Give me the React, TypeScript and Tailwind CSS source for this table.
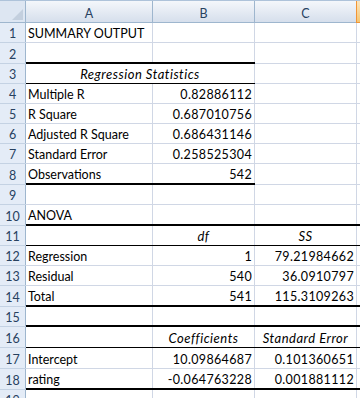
import React from 'react';

type Line = 'grid' | 'thin' | 'thick';
type Col = 'A' | 'B' | 'C' | 'AB' | 'D';

interface CellDef {
  col: Col;
  text?: string;
  align?: 'l' | 'r' | 'c';
  italic?: boolean;
  line?: Line;
}

interface RowDef {
  n: number;
  h: 20 | 21;
  cells: CellDef[];
}

const widths: Record<Col, string> = {
  A: 'w-[127px] shrink-0',
  B: 'w-[102px] shrink-0',
  C: 'w-[102px] shrink-0',
  AB: 'w-[229px] shrink-0',
  D: 'flex-1 min-w-0',
};

const heights = { 20: 'h-[20px]', 21: 'h-[21px]' };

const lines: Record<Line, string> = {
  grid: 'h-px bg-[#d0d7e5]',
  thin: 'h-px bg-black',
  thick: 'h-[2px] bg-black',
};

const aligns = {
  l: 'justify-start pl-[2px]',
  r: 'justify-end pr-[2px] tracking-[0.35px]',
  c: 'justify-center',
};

// blank cells for a row, with an optional border style
function blank(line: Line = 'grid'): CellDef[] {
  return [
    { col: 'A', line },
    { col: 'B', line },
    { col: 'C', line },
    { col: 'D', line },
  ];
}

// label + value(s); wide tables carry their borders on into column D
function row(a: string, b: string, line: Line = 'grid', c = '', wide = false): CellDef[] {
  return [
    { col: 'A', text: a, line },
    { col: 'B', text: b, align: 'r', line },
    { col: 'C', text: c, align: 'r', line: wide ? line : 'grid' },
    { col: 'D', line: wide ? line : 'grid' },
  ];
}

const rows: RowDef[] = [
  { n: 1, h: 20, cells: [{ col: 'A', text: 'SUMMARY OUTPUT' }, { col: 'B' }, { col: 'C' }, { col: 'D' }] },
  { n: 2, h: 21, cells: [{ col: 'A', line: 'thick' }, { col: 'B', line: 'thick' }, { col: 'C' }, { col: 'D' }] },
  {
    n: 3,
    h: 20,
    cells: [
      { col: 'AB', text: 'Regression Statistics', align: 'c', italic: true, line: 'thin' },
      { col: 'C' },
      { col: 'D' },
    ],
  },
  { n: 4, h: 20, cells: row('Multiple R', '0.82886112') },
  { n: 5, h: 20, cells: row('R Square', '0.687010756') },
  { n: 6, h: 20, cells: row('Adjusted R Square', '0.686431146') },
  { n: 7, h: 20, cells: row('Standard Error', '0.258525304') },
  { n: 8, h: 21, cells: row('Observations', '542', 'thick') },
  { n: 9, h: 20, cells: blank() },
  {
    n: 10,
    h: 21,
    cells: [{ col: 'A', text: 'ANOVA', line: 'thick' }, { col: 'B', line: 'thick' }, { col: 'C', line: 'thick' }, { col: 'D', line: 'thick' }],
  },
  {
    n: 11,
    h: 20,
    cells: [
      { col: 'A', line: 'thin' },
      { col: 'B', text: 'df', align: 'c', italic: true, line: 'thin' },
      { col: 'C', text: 'SS', align: 'c', italic: true, line: 'thin' },
      { col: 'D', line: 'thin' },
    ],
  },
  { n: 12, h: 20, cells: row('Regression', '1', 'grid', '79.21984662', true) },
  { n: 13, h: 20, cells: row('Residual', '540', 'grid', '36.0910797', true) },
  { n: 14, h: 21, cells: row('Total', '541', 'thick', '115.3109263', true) },
  { n: 15, h: 20, cells: blank('thick') },
  {
    n: 16,
    h: 21,
    cells: [
      { col: 'A', line: 'thin' },
      { col: 'B', text: 'Coefficients', align: 'c', italic: true, line: 'thin' },
      { col: 'C', text: 'Standard Error', align: 'c', italic: true, line: 'thin' },
      { col: 'D', line: 'thin' },
    ],
  },
  { n: 17, h: 21, cells: row('Intercept', '10.09864687', 'grid', '0.101360651', true) },
  { n: 18, h: 21, cells: row('rating', '-0.064763228', 'thick', '0.001881112', true) },
  { n: 19, h: 20, cells: blank() },
];

function Cell({ col, text, align = 'l', italic, line = 'grid' }: CellDef) {
  return (
    <div className={`flex flex-col ${widths[col]}`}>
      <div
        className={`flex-1 min-h-0 flex items-end pb-[1px] whitespace-nowrap ${aligns[align]} ${
          col === 'D' ? '' : 'border-r border-[#d0d7e5]'
        } ${italic ? 'italic text-[13px] tracking-[0.5px]' : ''}`}
      >
        {text}
      </div>
      <div className={lines[line]} />
    </div>
  );
}

function RowHead({ n }: { n: number }) {
  return (
    <div className="flex flex-col w-[26px] shrink-0">
      <div className="flex-1 min-h-0 flex items-end justify-center pb-[1px] bg-[#e4ecf7] border-r border-[#9eb6ce] text-[#27415f]">
        {n}
      </div>
      <div className="h-px bg-[#c4d2e3]" />
    </div>
  );
}

function ColHead({ label, w }: { label: string; w: string }) {
  return (
    <div className={`flex flex-col ${w}`}>
      <div className="flex-1 flex items-end justify-center pb-[1px] bg-gradient-to-b from-[#f4f7fb] to-[#d6dfec] border-r border-[#9eb6ce] text-[#27415f]">
        {label}
      </div>
      <div className="h-px bg-[#9eb6ce]" />
    </div>
  );
}

export default function App() {
  return (
    <div className="w-[360px] h-[398px] overflow-hidden bg-white font-[family-name:Lato,sans-serif] text-[12.5px] leading-[15px] text-black">
      {/* column letters */}
      <div className="flex h-[23px] border-t border-[#aec3da]">
        <div className="flex flex-col w-[26px] shrink-0">
          <div className="flex-1 flex items-end justify-end pr-[2px] pb-[2px] bg-[#dde6f2] border-r border-[#9eb6ce]">
            <svg width="11" height="11" viewBox="0 0 11 11">
              <polygon points="11,0 11,11 0,11" fill="#c3cfde" />
            </svg>
          </div>
          <div className="h-px bg-[#9eb6ce]" />
        </div>
        <ColHead label="A" w="w-[127px] shrink-0" />
        <ColHead label="B" w="w-[102px] shrink-0" />
        <div className="flex flex-col w-[101px] shrink-0">
          <div className="flex-1 flex items-end justify-center pb-[1px] bg-gradient-to-b from-[#f4f7fb] to-[#d6dfec] text-[#27415f]">
            C
          </div>
          <div className="h-px bg-[#9eb6ce]" />
        </div>
        {/* selected column */}
        <div className="flex flex-col flex-1 min-w-0">
          <div className="flex-1 bg-gradient-to-b from-[#fbe6bf] to-[#f5c672] border-l border-[#f29536]" />
          <div className="h-px bg-[#f29536]" />
        </div>
      </div>

      {rows.map((r) => (
        <div key={r.n} className={`flex ${heights[r.h]}`}>
          <RowHead n={r.n} />
          {r.cells.map((c, i) => (
            <Cell key={i} {...c} />
          ))}
        </div>
      ))}
    </div>
  );
}
